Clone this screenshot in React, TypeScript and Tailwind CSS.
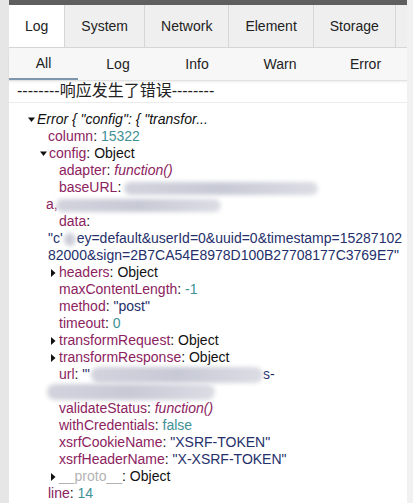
import type { ReactNode } from "react"

const KEY = "text-[#8c2360]"
const NUM = "text-[#3f9196]"
const STR = "text-[#252f6a]"

function Down() {
  return (
    <svg className="inline-block w-[9px] h-[17px] align-top" viewBox="0 0 9 17">
      <path d="M0 6.5 L7 6.5 L3.5 11 Z" fill="#111" />
    </svg>
  )
}

function Right() {
  return (
    <svg className="inline-block w-[9px] h-[17px] align-top" viewBox="0 0 9 17">
      <path d="M1 5 L5.5 9 L1 13 Z" fill="#111" />
    </svg>
  )
}

function Row({ className, children }: { className: string; children: ReactNode }) {
  return <div className={`h-[17px] leading-[17px] whitespace-nowrap ${className}`}>{children}</div>
}

function Blob({ className }: { className: string }) {
  return (
    <span
      className={`inline-block align-middle rounded-full bg-gradient-to-r from-[#d2d3dd] via-[#c7c9d5] to-[#dcdde4] blur-[2px] ${className}`}
    />
  )
}

function K({ children }: { children: ReactNode }) {
  return (
    <>
      <span className={KEY}>{children}</span>
      <span>: </span>
    </>
  )
}

const tabs = ["Log", "System", "Network", "Element", "Storage"]
const filters = [
  { label: "All", w: "w-[69px]" },
  { label: "Log", w: "w-[80px]" },
  { label: "Info", w: "w-[78px]" },
  { label: "Warn", w: "w-[88px]" },
  { label: "Error", w: "w-[83px]" },
]

export default function App() {
  return (
    <div className="flex w-[413px] h-[503px] overflow-hidden bg-white font-['Liberation_Sans','Noto_Sans_CJK_SC',sans-serif] text-[14px] text-[#111]">
      <div className="w-[9px] shrink-0 bg-[#e6e6e6]" />

      <div className="w-[398px] shrink-0 flex flex-col">
        <div className="h-[5px] bg-[#5f5f5f]" />

        {/* top tabs */}
        <div className="flex h-[43px] border-b border-[#d6d6d6] bg-[#efefef]">
          {tabs.map((t, i) => (
            <div
              key={t}
              className={`flex items-center px-4 border-r border-[#d6d6d6] text-[#222] ${i === 0 ? "bg-white" : "bg-[#efefef]"}`}
            >
              {t}
            </div>
          ))}
          <div className="flex-1" />
        </div>

        {/* filter bar */}
        <div className="flex h-[33px] bg-[#f7f7f7] border-b border-[#e2e2e2] shadow-[0_1px_2px_rgba(0,0,0,0.08)]">
          {filters.map((f, i) => (
            <div
              key={f.label}
              className={`${f.w} flex items-center justify-center text-[#222] ${i === 0 ? "border-b-2 border-[#7f97ad]" : ""}`}
            >
              {f.label}
            </div>
          ))}
        </div>

        {/* log line */}
        <div className="h-[22px] leading-[20px] pl-[8px] border-b border-[#ececec] text-[16px] text-[#222] whitespace-nowrap">
          --------响应发生了错误--------
        </div>

        {/* error object */}
        <div className="pt-[8px]">
          <Row className="pl-[19px]">
            <Down />
            <span className="italic">Error {"{"} "config": {"{"} "transfor...</span>
          </Row>
          <Row className="pl-[39px]">
            <K>column</K>
            <span className={NUM}>15322</span>
          </Row>
          <Row className="pl-[31px]">
            <Down />
            <K>config</K>
            <span>Object</span>
          </Row>
          <Row className="pl-[50px]">
            <K>adapter</K>
            <span className={`${KEY} italic`}>function()</span>
          </Row>
          <Row className="pl-[50px]">
            <K>baseURL</K>
            <Blob className="w-[194px] h-[13px] -ml-[1px]" />
          </Row>
          <Row className="pl-[37px]">
            <span className={KEY}>a,</span>
            <Blob className="w-[165px] h-[13px] -ml-[2px] mt-[1px]" />
          </Row>
          <Row className="pl-[50px]">
            <span className={KEY}>data</span>
            <span>:</span>
          </Row>
          <Row className={`pl-[39px] ${STR}`}>
            <span>"c'</span>
            <Blob className="w-[12px] h-[13px] mx-[1px]" />
            <span>ey=default&amp;userId=0&amp;uuid=0&amp;timestamp=15287102</span>
          </Row>
          <Row className={`pl-[39px] ${STR}`}>82000&amp;sign=2B7CA54E8978D100B27708177C3769E7"</Row>
          <Row className="pl-[41px]">
            <Right />
            <K>headers</K>
            <span>Object</span>
          </Row>
          <Row className="pl-[50px]">
            <K>maxContentLength</K>
            <span className={NUM}>-1</span>
          </Row>
          <Row className="pl-[50px]">
            <K>method</K>
            <span className={STR}>"post"</span>
          </Row>
          <Row className="pl-[50px]">
            <K>timeout</K>
            <span className={NUM}>0</span>
          </Row>
          <Row className="pl-[41px]">
            <Right />
            <K>transformRequest</K>
            <span>Object</span>
          </Row>
          <Row className="pl-[41px]">
            <Right />
            <K>transformResponse</K>
            <span>Object</span>
          </Row>
          <Row className="pl-[50px]">
            <K>url</K>
            <span className={STR}>"'</span>
            <Blob className="w-[172px] h-[16px] ml-[1px]" />
            <span className={STR}>s-</span>
          </Row>
          <Row className="pl-[38px]">
            <Blob className="w-[168px] h-[16px]" />
          </Row>
          <Row className="pl-[50px]">
            <K>validateStatus</K>
            <span className={`${KEY} italic`}>function()</span>
          </Row>
          <Row className="pl-[50px]">
            <K>withCredentials</K>
            <span className={NUM}>false</span>
          </Row>
          <Row className="pl-[50px]">
            <K>xsrfCookieName</K>
            <span className={STR}>"XSRF-TOKEN"</span>
          </Row>
          <Row className="pl-[50px]">
            <K>xsrfHeaderName</K>
            <span className={STR}>"X-XSRF-TOKEN"</span>
          </Row>
          <Row className="pl-[41px]">
            <Right />
            <span className="text-[#b3b3b3]">__proto__</span>
            <span>: Object</span>
          </Row>
          <Row className="pl-[39px]">
            <K>line</K>
            <span className={NUM}>14</span>
          </Row>
        </div>
      </div>

      <div className="flex-1 bg-[#f1f1f1]" />
    </div>
  )
}
